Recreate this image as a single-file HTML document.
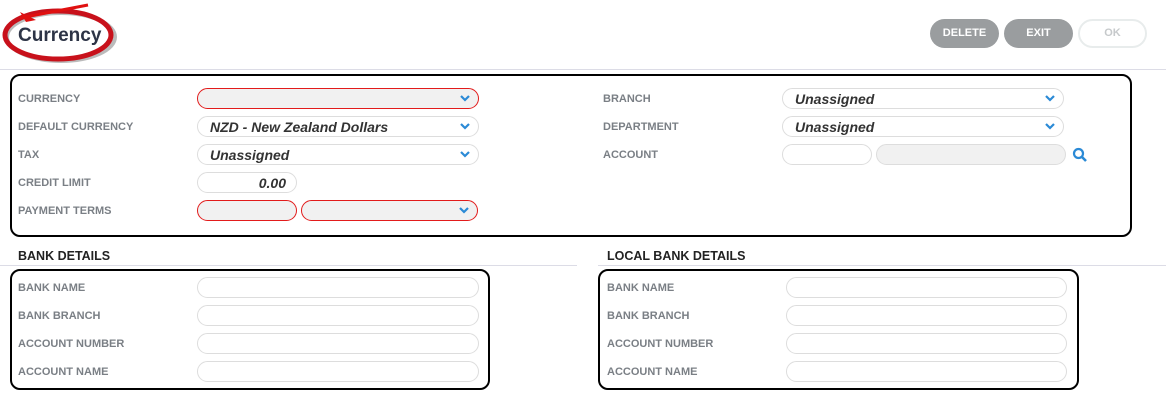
<!DOCTYPE html>
<html><head><style>
*{box-sizing:border-box;margin:0;padding:0}
body{width:1166px;height:405px;background:#fff;font-family:"Liberation Sans",sans-serif;position:relative;overflow:hidden}
.a{position:absolute}
.lbl{position:absolute;font-size:11px;font-weight:bold;color:#7a7f85;letter-spacing:0}
.inp{position:absolute;height:21px;border:1px solid #ddd;border-radius:11px;background:#fff}
.g{background:#f1f1f1}
.r{border-color:#e21b1b}
.val{position:absolute;left:12px;top:2px;font-size:14px;font-weight:bold;font-style:italic;color:#333}
.chev{position:absolute;right:8px;top:5px;width:10px;height:8px}
.box{position:absolute;border:2px solid #000;border-radius:10px}
.btn{position:absolute;top:19px;width:69px;height:29px;border-radius:15px;background:#9a9d9f;color:#fff;font-size:11px;font-weight:bold;text-align:center;line-height:29px}
.hd{position:absolute;font-size:12.5px;font-weight:bold;color:#222}
</style></head><body>
<svg class="a" style="left:0;top:0" width="125" height="68">
<ellipse cx="61" cy="37" rx="54" ry="24" fill="none" stroke="#bbb" stroke-width="4"/>
<ellipse cx="58" cy="35" rx="53" ry="24" fill="none" stroke="#c8111b" stroke-width="5"/>
<path d="M20 18 L88 5" stroke="#e01010" stroke-width="3"/>
<path d="M20 12 L36 20 L26 22Z" fill="#e01010"/>
<text x="18" y="41" font-family="Liberation Sans" font-weight="bold" font-size="19" fill="#2d3446">Currency</text>
</svg>
<div class="btn" style="left:930px">DELETE</div>
<div class="btn" style="left:1004px">EXIT</div>
<div class="btn" style="left:1078px;background:#fff;border:2px solid #e8ecec;color:#c6c9cb;line-height:25px">OK</div>
<div class="a" style="left:0;top:69px;width:1166px;height:1px;background:#dcdce6"></div>
<div class="box" style="left:10px;top:74px;width:1122px;height:163px"></div>
<div class="lbl" style="left:18px;top:93px">CURRENCY</div>
<div class="lbl" style="left:18px;top:121px">DEFAULT CURRENCY</div>
<div class="lbl" style="left:18px;top:149px">TAX</div>
<div class="lbl" style="left:18px;top:177px">CREDIT LIMIT</div>
<div class="lbl" style="left:18px;top:205px">PAYMENT TERMS</div>
<div class="inp g r" style="left:197px;top:88px;width:282px"><svg class="chev" viewBox="0 0 10 8"><path d="M1 2L5 6L9 2" stroke="#2b8ad6" stroke-width="2.2" fill="none"/></svg></div>
<div class="inp" style="left:197px;top:116px;width:282px"><span class="val">NZD - New Zealand Dollars</span><svg class="chev" viewBox="0 0 10 8"><path d="M1 2L5 6L9 2" stroke="#2b8ad6" stroke-width="2.2" fill="none"/></svg></div>
<div class="inp" style="left:197px;top:144px;width:282px"><span class="val">Unassigned</span><svg class="chev" viewBox="0 0 10 8"><path d="M1 2L5 6L9 2" stroke="#2b8ad6" stroke-width="2.2" fill="none"/></svg></div>
<div class="inp" style="left:197px;top:172px;width:100px"><span class="val" style="left:auto;right:10px">0.00</span></div>
<div class="inp g r" style="left:197px;top:200px;width:100px"></div>
<div class="inp g r" style="left:301px;top:200px;width:177px"><svg class="chev" viewBox="0 0 10 8"><path d="M1 2L5 6L9 2" stroke="#2b8ad6" stroke-width="2.2" fill="none"/></svg></div>
<div class="lbl" style="left:603px;top:93px">BRANCH</div>
<div class="lbl" style="left:603px;top:121px">DEPARTMENT</div>
<div class="lbl" style="left:603px;top:149px">ACCOUNT</div>
<div class="inp" style="left:782px;top:88px;width:282px"><span class="val">Unassigned</span><svg class="chev" viewBox="0 0 10 8"><path d="M1 2L5 6L9 2" stroke="#2b8ad6" stroke-width="2.2" fill="none"/></svg></div>
<div class="inp" style="left:782px;top:116px;width:282px"><span class="val">Unassigned</span><svg class="chev" viewBox="0 0 10 8"><path d="M1 2L5 6L9 2" stroke="#2b8ad6" stroke-width="2.2" fill="none"/></svg></div>
<div class="inp" style="left:782px;top:144px;width:90px"></div>
<div class="inp g" style="left:876px;top:144px;width:190px"></div>
<svg class="a" style="left:1072px;top:147px" width="16" height="16" viewBox="0 0 16 16"><circle cx="6.5" cy="6.5" r="4.5" stroke="#2b8ad6" stroke-width="2.2" fill="none"/><path d="M10 10L14 14" stroke="#2b8ad6" stroke-width="2.6"/></svg>
<div class="hd" style="left:18px;top:249px">BANK DETAILS</div>
<div class="hd" style="left:607px;top:249px">LOCAL BANK DETAILS</div>
<div class="a" style="left:0;top:265px;width:577px;height:1px;background:#dcdce6"></div>
<div class="a" style="left:598px;top:265px;width:568px;height:1px;background:#dcdce6"></div>
<div class="box" style="left:10px;top:269px;width:480px;height:121px"></div>
<div class="box" style="left:598px;top:269px;width:481px;height:121px"></div>
<div class="lbl" style="left:18px;top:282px">BANK NAME</div>
<div class="lbl" style="left:18px;top:310px">BANK BRANCH</div>
<div class="lbl" style="left:18px;top:338px">ACCOUNT NUMBER</div>
<div class="lbl" style="left:18px;top:366px">ACCOUNT NAME</div>
<div class="inp" style="left:197px;top:277px;width:282px"></div>
<div class="inp" style="left:197px;top:305px;width:282px"></div>
<div class="inp" style="left:197px;top:333px;width:282px"></div>
<div class="inp" style="left:197px;top:361px;width:282px"></div>
<div class="lbl" style="left:607px;top:282px">BANK NAME</div>
<div class="lbl" style="left:607px;top:310px">BANK BRANCH</div>
<div class="lbl" style="left:607px;top:338px">ACCOUNT NUMBER</div>
<div class="lbl" style="left:607px;top:366px">ACCOUNT NAME</div>
<div class="inp" style="left:786px;top:277px;width:281px"></div>
<div class="inp" style="left:786px;top:305px;width:281px"></div>
<div class="inp" style="left:786px;top:333px;width:281px"></div>
<div class="inp" style="left:786px;top:361px;width:281px"></div>
</body></html>
